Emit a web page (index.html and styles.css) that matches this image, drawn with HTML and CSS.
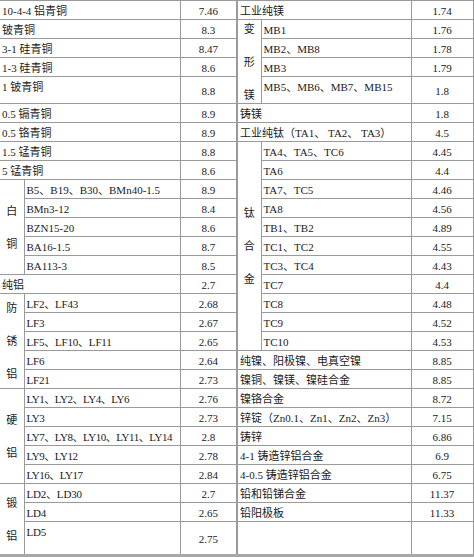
FILE: index.html
```html
<!DOCTYPE html>
<html lang="zh-CN">
<head>
<meta charset="utf-8">
<title>金属密度表</title>
<link rel="stylesheet" href="styles.css">
</head>
<body>
<table class="density">
  <colgroup>
    <col class="c-grp-l">
    <col class="c-name-l">
    <col class="c-val-l">
    <col class="c-grp-r">
    <col class="c-name-r">
    <col class="c-val-r">
  </colgroup>
  <tbody>
    <tr class="row">
      <td class="name first" colspan="2">10-4-4 铝青铜</td><td class="val">7.46</td>
      <td class="name mid" colspan="2">工业纯镁</td><td class="val last">1.74</td>
    </tr>
    <tr class="row">
      <td class="name first" colspan="2">铍青铜</td><td class="val">8.3</td>
      <td class="grp mid" rowspan="4"><div class="stack"><span>变</span><span>形</span><span>镁</span></div></td>
      <td class="name">MB1</td><td class="val last">1.76</td>
    </tr>
    <tr class="row">
      <td class="name first" colspan="2">3-1 硅青铜</td><td class="val">8.47</td>
      <td class="name">MB2、MB8</td><td class="val last">1.78</td>
    </tr>
    <tr class="row">
      <td class="name first" colspan="2">1-3 硅青铜</td><td class="val">8.6</td>
      <td class="name">MB3</td><td class="val last">1.79</td>
    </tr>
    <tr class="row tall">
      <td class="name first" colspan="2">1 铍青铜</td><td class="val">8.8</td>
      <td class="name">MB5、MB6、MB7、MB15</td><td class="val last">1.8</td>
    </tr>
    <tr class="row">
      <td class="name first" colspan="2">0.5 镉青铜</td><td class="val">8.9</td>
      <td class="name mid" colspan="2">铸镁</td><td class="val last">1.8</td>
    </tr>
    <tr class="row">
      <td class="name first" colspan="2">0.5 铬青铜</td><td class="val">8.9</td>
      <td class="name mid" colspan="2">工业纯钛（TA1、 TA2、 TA3）</td><td class="val last">4.5</td>
    </tr>
    <tr class="row">
      <td class="name first" colspan="2">1.5 锰青铜</td><td class="val">8.8</td>
      <td class="grp mid" rowspan="11"><div class="stack"><span>钛</span><span>合</span><span>金</span></div></td>
      <td class="name">TA4、TA5、TC6</td><td class="val last">4.45</td>
    </tr>
    <tr class="row">
      <td class="name first" colspan="2">5 锰青铜</td><td class="val">8.6</td>
      <td class="name">TA6</td><td class="val last">4.4</td>
    </tr>
    <tr class="row">
      <td class="grp first" rowspan="5"><div class="stack"><span>白</span><span>铜</span></div></td>
      <td class="name">B5、B19、B30、BMn40-1.5</td><td class="val">8.9</td>
      <td class="name">TA7、TC5</td><td class="val last">4.46</td>
    </tr>
    <tr class="row">
      <td class="name">BMn3-12</td><td class="val">8.4</td>
      <td class="name">TA8</td><td class="val last">4.56</td>
    </tr>
    <tr class="row">
      <td class="name">BZN15-20</td><td class="val">8.6</td>
      <td class="name">TB1、TB2</td><td class="val last">4.89</td>
    </tr>
    <tr class="row">
      <td class="name">BA16-1.5</td><td class="val">8.7</td>
      <td class="name">TC1、TC2</td><td class="val last">4.55</td>
    </tr>
    <tr class="row">
      <td class="name">BA113-3</td><td class="val">8.5</td>
      <td class="name">TC3、TC4</td><td class="val last">4.43</td>
    </tr>
    <tr class="row">
      <td class="name first" colspan="2">纯铝</td><td class="val">2.7</td>
      <td class="name">TC7</td><td class="val last">4.4</td>
    </tr>
    <tr class="row">
      <td class="grp first" rowspan="5"><div class="stack"><span>防</span><span>锈</span><span>铝</span></div></td>
      <td class="name tight">LF2、LF43</td><td class="val">2.68</td>
      <td class="name">TC8</td><td class="val last">4.48</td>
    </tr>
    <tr class="row">
      <td class="name tight">LF3</td><td class="val">2.67</td>
      <td class="name">TC9</td><td class="val last">4.52</td>
    </tr>
    <tr class="row">
      <td class="name tight">LF5、LF10、LF11</td><td class="val">2.65</td>
      <td class="name">TC10</td><td class="val last">4.53</td>
    </tr>
    <tr class="row">
      <td class="name tight">LF6</td><td class="val">2.64</td>
      <td class="name mid" colspan="2">纯镍、阳极镍、电真空镍</td><td class="val last">8.85</td>
    </tr>
    <tr class="row">
      <td class="name tight">LF21</td><td class="val">2.73</td>
      <td class="name mid" colspan="2">镍铜、镍镁、镍硅合金</td><td class="val last">8.85</td>
    </tr>
    <tr class="row">
      <td class="grp first" rowspan="5"><div class="stack"><span>硬</span><span>铝</span></div></td>
      <td class="name tighter">LY1、LY2、LY4、LY6</td><td class="val">2.76</td>
      <td class="name mid" colspan="2">镍铬合金</td><td class="val last">8.72</td>
    </tr>
    <tr class="row">
      <td class="name tighter">LY3</td><td class="val">2.73</td>
      <td class="name mid" colspan="2">锌锭（Zn0.1、Zn1、Zn2、Zn3）</td><td class="val last">7.15</td>
    </tr>
    <tr class="row">
      <td class="name tighter">LY7、LY8、LY10、LY11、LY14</td><td class="val">2.8</td>
      <td class="name mid" colspan="2">铸锌</td><td class="val last">6.86</td>
    </tr>
    <tr class="row">
      <td class="name tighter">LY9、LY12</td><td class="val">2.78</td>
      <td class="name mid" colspan="2">4-1 铸造锌铝合金</td><td class="val last">6.9</td>
    </tr>
    <tr class="row">
      <td class="name tighter">LY16、LY17</td><td class="val">2.84</td>
      <td class="name mid" colspan="2">4-0.5 铸造锌铝合金</td><td class="val last">6.75</td>
    </tr>
    <tr class="row">
      <td class="grp first" rowspan="3"><div class="stack"><span>锻</span><span>铝</span></div></td>
      <td class="name tight">LD2、LD30</td><td class="val">2.7</td>
      <td class="name mid" colspan="2">铅和铅锑合金</td><td class="val last">11.37</td>
    </tr>
    <tr class="row">
      <td class="name tight">LD4</td><td class="val">2.65</td>
      <td class="name mid" colspan="2">铅阳极板</td><td class="val last">11.33</td>
    </tr>
    <tr class="row end">
      <td class="name tight">LD5</td><td class="val">2.75</td>
      <td class="name mid" colspan="2"></td><td class="val last"></td>
    </tr>
  </tbody>
</table>
</body>
</html>
```
FILE: styles.css
```css
html, body {
  margin: 0;
  padding: 0;
  background: #ffffff;
}

.density {
  width: 473px;
  table-layout: fixed;
  border-collapse: collapse;
  font-family: "Liberation Serif", "Noto Sans CJK SC", serif;
  font-size: 11px;
  font-kerning: normal;
  color: #1a1a1a;
  border-top: 1px solid #9a9a9a;
  border-bottom: 3px solid #a8a8a8;
}

.c-grp-l { width: 24px; }
.c-name-l { width: 156px; }
.c-val-l { width: 57px; }
.c-grp-r { width: 24px; }
.c-name-r { width: 150px; }
.c-val-r { width: 62px; }

.density td {
  border: 1px solid #9a9a9a;
  padding: 0;
  line-height: 15px;
  white-space: nowrap;
  overflow: hidden;
}

.row { height: 19px; }
.row.tall { height: 27px; }
.row.end { height: 34px; }

.density td.first { border-left: none; }
.density td.mid { border-left: 2px solid #9a9a9a; }
.density td.last { border-right: 1px solid #9a9a9a; }

.name {
  vertical-align: top;
  padding: 3px 0 0 2px !important;
  text-align: left;
}

.name.tight { letter-spacing: -0.2px; }
.name.tighter { letter-spacing: -0.45px; }

.val {
  vertical-align: middle;
  text-align: center;
  padding: 3px 0 0 0 !important;
}

.grp {
  vertical-align: middle;
  text-align: center;
}

.stack {
  display: flex;
  flex-direction: column;
  align-items: center;
  gap: 19px;
  line-height: 14px;
}
```
